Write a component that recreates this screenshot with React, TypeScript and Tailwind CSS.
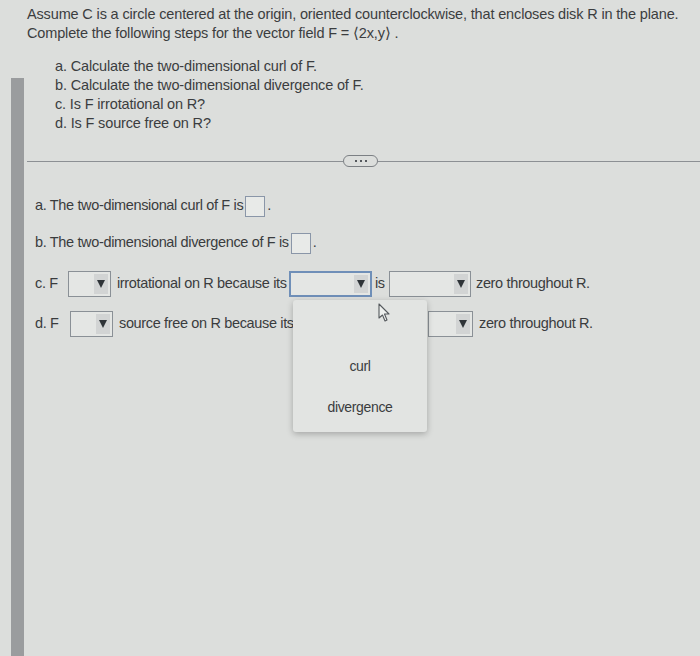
import React from "react";

function Select({ w, focused = false }: { w: number; focused?: boolean }) {
  return (
    <span
      className={`inline-flex items-stretch h-[26px] bg-[#e4e6e4] ${
        focused ? "border-2 border-[#6f8fb8]" : "border border-[#8a9096]"
      }`}
      style={{ width: w }}
    >
      <span className="flex-1" />
      <span className="w-[14px] my-[2px] mr-[2px] bg-[#d2d4d4] flex items-center justify-center">
        <svg width="10" height="10" viewBox="0 0 10 10">
          <polygon points="1,1 9,1 5,9" fill="#2f3438" />
        </svg>
      </span>
    </span>
  );
}

function Box() {
  return <span className="inline-block w-[20px] h-[21px] border border-[#8a96a8] bg-[#e8eae8] align-middle" />;
}

export default function App() {
  return (
    <div
      className="w-[700px] h-[656px] bg-[#dcdedc] text-[#3b3d3f] flex overflow-hidden"
      style={{ fontFamily: '"Liberation Sans", Arial, sans-serif' }}
    >
      <div className="w-[27px] shrink-0 flex flex-col">
        <div className="h-[78px]" />
        <div className="flex-1 ml-[11px] w-[13px] bg-[#9a9c9e]" />
      </div>
      <div className="flex-1 flex flex-col">
        <div className="pt-[5px] text-[14.5px] leading-[19px] tracking-[-0.15px]">
          <p>Assume C is a circle centered at the origin, oriented counterclockwise, that encloses disk R in the plane.</p>
          <p>Complete the following steps for the vector field F = ⟨2x,y⟩ .</p>
          <div className="pl-[28px] pt-[14px] flex flex-col">
            <p>a. Calculate the two-dimensional curl of F.</p>
            <p>b. Calculate the two-dimensional divergence of F.</p>
            <p>c. Is F irrotational on R?</p>
            <p>d. Is F source free on R?</p>
          </div>
        </div>

        <div className="mt-[22px] flex items-center">
          <div className="w-[316px] h-px bg-[#8c9094]" />
          <div className="w-[35px] h-[12px] rounded-full border border-[#7c8084] flex items-center justify-center gap-[3px]">
            <span className="w-[2px] h-[2px] bg-[#55595d]" />
            <span className="w-[2px] h-[2px] bg-[#55595d]" />
            <span className="w-[2px] h-[2px] bg-[#55595d]" />
          </div>
          <div className="flex-1 h-px bg-[#8c9094]" />
        </div>

        <div className="pl-[8px] text-[14.5px] tracking-[-0.35px] text-[#3a3c3e] relative">
          <div className="mt-[27px] flex items-center gap-[2px] h-[24px]">
            <span>a. The two-dimensional curl of F is</span>
            <Box />
            <span>.</span>
          </div>
          <div className="mt-[13px] flex items-center gap-[2px] h-[24px]">
            <span>b. The two-dimensional divergence of F is</span>
            <Box />
            <span>.</span>
          </div>
          <div className="mt-[15px] flex items-center h-[28px]">
            <span className="w-[33px]">c. F</span>
            <Select w={43} />
            <span className="ml-[6px] w-[172px] whitespace-nowrap">irrotational on R because its</span>
            <Select w={83} focused />
            <span className="ml-[3px] w-[14px]">is</span>
            <Select w={82} />
            <span className="ml-[5px]">zero throughout R.</span>
          </div>
          <div className="mt-[12px] flex items-center h-[28px]">
            <span className="w-[35px]">d. F</span>
            <Select w={43} />
            <span className="ml-[6px] w-[178px] whitespace-nowrap">source free on R because its</span>
            <span className="w-[131px]" />
            <Select w={45} />
            <span className="ml-[6px]">zero throughout R.</span>
          </div>

          <div className="absolute left-[266px] top-[133px] w-[134px] h-[132px] bg-[#e2e4e2] rounded-[3px] shadow-[0_2px_6px_rgba(0,0,0,0.25)] flex flex-col items-center pt-[56px] gap-[20px] text-[14px]">
            <span>curl</span>
            <span>divergence</span>
          </div>

          <svg className="absolute left-[351px] top-[136px]" width="14" height="20" viewBox="0 0 14 20">
            <path d="M1 1 L1 15 L4.5 12 L7 18 L9 17 L6.5 11 L11 11 Z" fill="#eef0ee" stroke="#55595d" strokeWidth="1.1" strokeLinejoin="round" />
          </svg>
        </div>
      </div>
    </div>
  );
}
